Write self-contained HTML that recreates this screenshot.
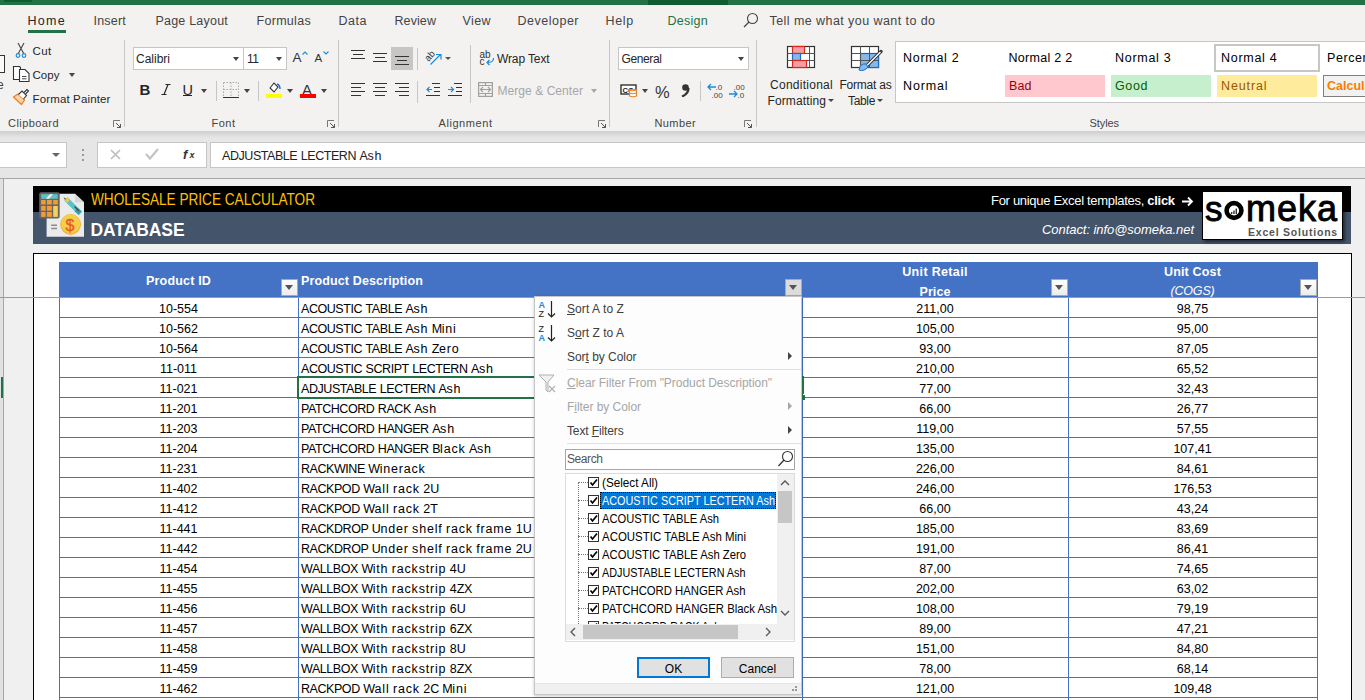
<!DOCTYPE html><html><head><meta charset="utf-8"><style>
html,body{margin:0;padding:0;width:1365px;height:700px;overflow:hidden;background:#f3f2f1}
body{position:relative;font-family:"Liberation Sans",sans-serif}
.t{position:absolute;white-space:nowrap;font-family:"Liberation Sans",sans-serif}
.r{position:absolute}
.tri{position:absolute;width:0;height:0;border-left:3.5px solid transparent;border-right:3.5px solid transparent;border-top:4px solid #444}
</style></head><body>
<div class="r" style="left:0px;top:0px;width:1365px;height:5px;background:#217346"></div>
<div class="r" style="left:4px;top:0px;width:28px;height:2px;background:#0e5c2f"></div>
<div class="r" style="left:648px;top:0px;width:80px;height:5px;background:#0e5c2f"></div>
<div class="r" style="left:0px;top:5px;width:1365px;height:126px;background:#f3f2f1"></div>
<div class="t" style="left:27.5px;top:15.42px;font-size:12.5px;line-height:12.5px;color:#262626;letter-spacing:1.288818359375px;">Home</div>
<div class="t" style="left:93.5px;top:15.42px;font-size:12.5px;line-height:12.5px;color:#444;letter-spacing:0.20621744791666666px;">Insert</div>
<div class="t" style="left:155.5px;top:15.42px;font-size:12.5px;line-height:12.5px;color:#444;letter-spacing:0.20925071022727273px;">Page Layout</div>
<div class="t" style="left:256.5px;top:15.42px;font-size:12.5px;line-height:12.5px;color:#444;letter-spacing:0.300537109375px;">Formulas</div>
<div class="t" style="left:338.5px;top:15.42px;font-size:12.5px;line-height:12.5px;color:#444;letter-spacing:0.52392578125px;">Data</div>
<div class="t" style="left:394.5px;top:15.42px;font-size:12.5px;line-height:12.5px;color:#444;letter-spacing:0.08561197916666667px;">Review</div>
<div class="t" style="left:462.5px;top:15.42px;font-size:12.5px;line-height:12.5px;color:#444;letter-spacing:0.40771484375px;">View</div>
<div class="t" style="left:517.5px;top:15.42px;font-size:12.5px;line-height:12.5px;color:#444;letter-spacing:0.5023871527777778px;">Developer</div>
<div class="t" style="left:605.5px;top:15.42px;font-size:12.5px;line-height:12.5px;color:#444;letter-spacing:0.69775390625px;">Help</div>
<div class="t" style="left:667.5px;top:15.42px;font-size:12.5px;line-height:12.5px;color:#217346;letter-spacing:0.2648111979166667px;">Design</div>
<div class="r" style="left:28px;top:30px;width:38px;height:3px;background:#217346"></div>
<div class="t" style="left:769.5px;top:15.42px;font-size:12.5px;line-height:12.5px;color:#444;letter-spacing:0.4351851851851852px;">Tell me what you want to do</div>
<svg class="r" style="left:743px;top:12px" width="16" height="16" viewBox="0 0 16 16"><circle cx="9.5" cy="6.5" r="5" fill="none" stroke="#444" stroke-width="1.1"/><line x1="6" y1="10" x2="1" y2="15" stroke="#444" stroke-width="1.2"/></svg>
<div class="r" style="left:124px;top:40px;width:1px;height:87px;background:#c8c6c4"></div>
<div class="r" style="left:338px;top:40px;width:1px;height:87px;background:#c8c6c4"></div>
<div class="r" style="left:609px;top:40px;width:1px;height:87px;background:#c8c6c4"></div>
<div class="r" style="left:756px;top:40px;width:1px;height:87px;background:#c8c6c4"></div>
<div class="r" style="left:0px;top:55px;width:5px;height:18px;background:#fafafa;border:1px solid #333;border-left:none;box-sizing:border-box"></div>
<div class="t" style="left:-3px;top:78.84px;font-size:12px;line-height:12px;color:#444;">e</div>
<div class="t" style="left:32.5px;top:46.27px;font-size:11.5px;line-height:11.5px;color:#262626;letter-spacing:0.36800781250000014px;">Cut</div>
<div class="t" style="left:32.5px;top:70.27px;font-size:11.5px;line-height:11.5px;color:#262626;letter-spacing:0.03822265625000032px;">Copy</div>
<div class="t" style="left:32.5px;top:94.27px;font-size:11.5px;line-height:11.5px;color:#262626;letter-spacing:0.13889787946428608px;">Format Painter</div>
<div class="t" style="left:8px;top:117.69px;font-size:11px;line-height:11px;color:#444;letter-spacing:0.4349826388888892px;">Clipboard</div>
<svg class="r" style="left:15px;top:42px" width="12" height="16" viewBox="0 0 12 16"><path d="M3 1 L9 12 M9 1 L3 12" stroke="#444" stroke-width="1.1" fill="none"/><circle cx="3" cy="13.5" r="1.8" fill="none" stroke="#1e8bd6" stroke-width="1.2"/><circle cx="9" cy="13.5" r="1.8" fill="none" stroke="#1e8bd6" stroke-width="1.2"/></svg>
<svg class="r" style="left:10px;top:63px" width="22" height="22" viewBox="10 63 22 22"><path d="M13.5 66.5 H19.5 L20.5 67.5 V79.5 H13.5 Z" fill="#fff" stroke="#333" stroke-width="1.1"/><path d="M19.5 69.5 H25 L29 73.5 V81.5 H19.5 Z" fill="#fff" stroke="#333" stroke-width="1.1"/><path d="M22 76.5 H26.5 M22 78.8 H26.5" stroke="#333" stroke-width="0.9"/></svg>
<div class="tri" style="left:69px;top:73px"></div>
<svg class="r" style="left:12px;top:88px" width="18" height="18" viewBox="12 88 18 18"><path d="M13.5 97 L21.5 104.5 L24.5 100 L18 94 Z" fill="#fbd3a8" stroke="#e8832a" stroke-width="1.3" stroke-linejoin="round"/><path d="M18.5 94.5 L22 91 L26.5 95.5 L23.5 99" fill="#fff" stroke="#333" stroke-width="1.1"/><path d="M24 92.5 L27 89.5 L28.5 91 L25.5 94" fill="#fff" stroke="#333" stroke-width="1.1"/></svg>
<svg class="r" style="left:113px;top:120px" width="8" height="8" viewBox="0 0 8 8"><path d="M0.5 7 V0.5 H7" fill="none" stroke="#777" stroke-width="1"/><path d="M3 3 L7.5 7.5 M4 7.5 H7.5 V4" fill="none" stroke="#555" stroke-width="1"/></svg>
<svg class="r" style="left:327px;top:120px" width="8" height="8" viewBox="0 0 8 8"><path d="M0.5 7 V0.5 H7" fill="none" stroke="#777" stroke-width="1"/><path d="M3 3 L7.5 7.5 M4 7.5 H7.5 V4" fill="none" stroke="#555" stroke-width="1"/></svg>
<svg class="r" style="left:598px;top:120px" width="8" height="8" viewBox="0 0 8 8"><path d="M0.5 7 V0.5 H7" fill="none" stroke="#777" stroke-width="1"/><path d="M3 3 L7.5 7.5 M4 7.5 H7.5 V4" fill="none" stroke="#555" stroke-width="1"/></svg>
<svg class="r" style="left:744px;top:120px" width="8" height="8" viewBox="0 0 8 8"><path d="M0.5 7 V0.5 H7" fill="none" stroke="#777" stroke-width="1"/><path d="M3 3 L7.5 7.5 M4 7.5 H7.5 V4" fill="none" stroke="#555" stroke-width="1"/></svg>
<div class="r" style="left:133px;top:47px;width:111px;height:23px;background:#fff;border:1px solid #c6c6c6;box-sizing:border-box"></div>
<div class="r" style="left:243px;top:47px;width:44px;height:23px;background:#fff;border:1px solid #c6c6c6;box-sizing:border-box"></div>
<div class="t" style="left:136px;top:52.84px;font-size:12px;line-height:12px;color:#262626;letter-spacing:-0.0013839285714283278px;">Calibri</div>
<div class="t" style="left:247px;top:52.84px;font-size:12px;line-height:12px;color:#262626;letter-spacing:-0.4787499999999998px;">11</div>
<div class="tri" style="left:233px;top:57px"></div>
<div class="tri" style="left:276px;top:57px"></div>
<div class="t" style="left:292.5px;top:51.07px;font-size:13.5px;line-height:13.5px;color:#333;">A</div>
<svg class="r" style="left:302px;top:51px" width="6" height="4" viewBox="0 0 6 4"><path d="M0.5 3.5 L3 1 L5.5 3.5" stroke="#1e8bd6" stroke-width="1.1" fill="none"/></svg>
<div class="t" style="left:314.5px;top:52.77px;font-size:11.5px;line-height:11.5px;color:#333;">A</div>
<svg class="r" style="left:323px;top:51px" width="6" height="4" viewBox="0 0 6 4"><path d="M0.5 0.5 L3 3 L5.5 0.5" stroke="#1e8bd6" stroke-width="1.1" fill="none"/></svg>
<div class="t" style="left:139.5px;top:82.30px;font-size:15px;line-height:15px;color:#262626;font-weight:700;">B</div>
<svg class="r" style="left:160px;top:83px" width="12" height="13" viewBox="0 0 12 13"><path d="M5.5 1.5 H10.5 M1.5 11.5 H6.5 M8 1.5 L4 11.5" stroke="#262626" stroke-width="1.2" fill="none"/></svg>
<div class="t" style="left:182.5px;top:82.73px;font-size:14.5px;line-height:14.5px;color:#262626;">U</div>
<div class="r" style="left:183px;top:95px;width:9px;height:1px;background:#262626"></div>
<div class="tri" style="left:201px;top:89px"></div>
<div class="r" style="left:216px;top:81px;width:1px;height:20px;background:#c8c6c4"></div>
<svg class="r" style="left:223px;top:82px" width="16" height="16" viewBox="0 0 16 16"><path d="M0.5 0.5 H15.5 V14.5 M0.5 0.5 V14.5 M8 0.5 V14.5 M0.5 7.5 H15.5" stroke="#aaa" stroke-width="1" stroke-dasharray="1.5 1.5" fill="none"/><path d="M0 15.5 H16" stroke="#333" stroke-width="1"/></svg>
<div class="tri" style="left:244px;top:89px"></div>
<div class="r" style="left:258px;top:81px;width:1px;height:20px;background:#c8c6c4"></div>
<svg class="r" style="left:266px;top:81px" width="16" height="13" viewBox="0 0 16 13"><path d="M4 7 L8 2 L12 6 L8 11 Z" fill="#fff" stroke="#333" stroke-width="1.1"/><path d="M11 3 Q14 4 14 8" stroke="#1e6fd6" stroke-width="1.5" fill="none"/></svg>
<div class="r" style="left:266px;top:94px;width:16px;height:4px;background:#ffff00"></div>
<div class="tri" style="left:287px;top:89px"></div>
<div class="t" style="left:302px;top:82.30px;font-size:15px;line-height:15px;color:#333;">A</div>
<div class="r" style="left:300px;top:94px;width:16px;height:4px;background:#ff0000"></div>
<div class="tri" style="left:321px;top:89px"></div>
<div class="t" style="left:211.5px;top:117.69px;font-size:11px;line-height:11px;color:#444;letter-spacing:0.4972070312500003px;">Font</div>
<div class="r" style="left:391px;top:47px;width:22px;height:23px;background:#c8c6c4"></div>
<div class="r" style="left:351px;top:50px;width:14px;height:1px;background:#333"></div><div class="r" style="left:353px;top:54px;width:10px;height:1px;background:#333"></div><div class="r" style="left:351px;top:58px;width:14px;height:1px;background:#333"></div>
<div class="r" style="left:373px;top:53px;width:14px;height:1px;background:#333"></div><div class="r" style="left:375px;top:57px;width:10px;height:1px;background:#333"></div><div class="r" style="left:373px;top:61px;width:14px;height:1px;background:#333"></div>
<div class="r" style="left:395px;top:56px;width:14px;height:1px;background:#333"></div><div class="r" style="left:397px;top:60px;width:10px;height:1px;background:#333"></div><div class="r" style="left:395px;top:64px;width:14px;height:1px;background:#333"></div>
<div class="r" style="left:417px;top:48px;width:1px;height:22px;background:#c8c6c4"></div>
<svg class="r" style="left:420px;top:44px" width="28" height="24" viewBox="420 44 28 24"><text x="0" y="0" font-size="9.5" font-family="Liberation Sans" fill="#333" transform="translate(428.5 62) rotate(-48)">ab</text><path d="M430.5 64.5 L440.5 54.5 M436 54.5 H441 V59.5" stroke="#1e8bd6" stroke-width="1.2" fill="none"/></svg>
<div class="tri" style="left:445px;top:57px;border-top-color:#555;border-left-width:3px;border-right-width:3px;border-top-width:3.5px"></div>
<div class="r" style="left:351px;top:83px;width:14px;height:1px;background:#333"></div><div class="r" style="left:351px;top:87px;width:10px;height:1px;background:#333"></div><div class="r" style="left:351px;top:91px;width:14px;height:1px;background:#333"></div><div class="r" style="left:351px;top:95px;width:10px;height:1px;background:#333"></div>
<div class="r" style="left:373px;top:83px;width:14px;height:1px;background:#333"></div><div class="r" style="left:375px;top:87px;width:10px;height:1px;background:#333"></div><div class="r" style="left:373px;top:91px;width:14px;height:1px;background:#333"></div><div class="r" style="left:375px;top:95px;width:10px;height:1px;background:#333"></div>
<div class="r" style="left:395px;top:83px;width:14px;height:1px;background:#333"></div><div class="r" style="left:399px;top:87px;width:10px;height:1px;background:#333"></div><div class="r" style="left:395px;top:91px;width:14px;height:1px;background:#333"></div><div class="r" style="left:399px;top:95px;width:10px;height:1px;background:#333"></div>
<div class="r" style="left:417px;top:81px;width:1px;height:22px;background:#c8c6c4"></div>
<svg class="r" style="left:426px;top:82px" width="14" height="14" viewBox="0 0 14 14"><path d="M6 1.5 H14 M8 5.5 H14 M8 9.5 H14 M0 13.5 H14" stroke="#333" stroke-width="1"/><path d="M1 7.5 H6 M3.5 5 L1 7.5 L3.5 10" stroke="#1e8bd6" stroke-width="1.2" fill="none"/></svg>
<svg class="r" style="left:448px;top:82px" width="14" height="14" viewBox="0 0 14 14"><path d="M6 1.5 H14 M8 5.5 H14 M8 9.5 H14 M0 13.5 H14" stroke="#333" stroke-width="1"/><path d="M0 7.5 H5.5 M3 5 L5.5 7.5 L3 10" stroke="#1e8bd6" stroke-width="1.2" fill="none"/></svg>
<div class="r" style="left:470px;top:45px;width:1px;height:58px;background:#c8c6c4"></div>
<svg class="r" style="left:478px;top:48px" width="18" height="20" viewBox="478 48 18 20"><text x="479.5" y="57.5" font-size="10" font-family="Liberation Sans" fill="#333">ab</text><text x="479.5" y="64.5" font-size="10" font-family="Liberation Sans" fill="#333">c</text><path d="M493.5 58 Q494 62.5 487 62.5 M489.5 60 L487 62.5 L489.5 65" stroke="#1e8bd6" stroke-width="1.2" fill="none"/></svg>
<div class="t" style="left:497px;top:52.84px;font-size:12px;line-height:12px;color:#262626;letter-spacing:-0.11989583333333324px;">Wrap Text</div>
<svg class="r" style="left:478px;top:82px" width="16" height="16" viewBox="0 0 16 16"><rect x="0.6" y="0.6" width="13.8" height="13.8" fill="none" stroke="#a0a0a0" stroke-width="1.2"/><path d="M0.5 3.5 H14.5 M0.5 11.5 H14.5 M7.5 0.5 V3.5 M7.5 11.5 V14.5 M2.5 7.5 H12.5 M5 5 L2.5 7.5 L5 10 M10 5 L12.5 7.5 L10 10" stroke="#a0a0a0" stroke-width="1.2" fill="none"/></svg>
<div class="t" style="left:497.5px;top:84.84px;font-size:12px;line-height:12px;color:#a6a6a6;letter-spacing:0.05671874999999967px;">Merge &amp; Center</div>
<div class="tri" style="left:591px;top:89px;border-top-color:#a6a6a6"></div>
<div class="t" style="left:438.5px;top:117.69px;font-size:11px;line-height:11px;color:#444;letter-spacing:0.5648350694444441px;">Alignment</div>
<div class="r" style="left:618px;top:47px;width:131px;height:23px;background:#fff;border:1px solid #c6c6c6;box-sizing:border-box"></div>
<div class="t" style="left:621.5px;top:52.84px;font-size:12px;line-height:12px;color:#262626;letter-spacing:-0.38468750000000035px;">General</div>
<div class="tri" style="left:738px;top:57px"></div>
<svg class="r" style="left:620px;top:84px" width="18" height="14" viewBox="0 0 18 14"><rect x="1" y="1" width="15" height="9" fill="#fff" stroke="#222" stroke-width="1.3"/><text x="2.5" y="8.5" font-size="7.5" font-weight="700" font-family="Liberation Sans" fill="#222">CC</text><path d="M9.5 6 Q13 4.5 16.5 6 V12 Q13 13.5 9.5 12 Z" fill="#fff" stroke="#e8832a" stroke-width="1.2"/><path d="M9.5 6 Q13 7.5 16.5 6 M9.5 9 Q13 10.5 16.5 9" stroke="#e8832a" stroke-width="1.1" fill="none"/></svg>
<div class="tri" style="left:642px;top:89px"></div>
<div class="t" style="left:655px;top:84.03px;font-size:16.5px;line-height:16.5px;color:#333;">%</div>
<svg class="r" style="left:681px;top:84px" width="9" height="13" viewBox="0 0 9 13"><circle cx="4.5" cy="3.5" r="3.3" fill="#333"/><path d="M7.5 4 Q7.5 10 1 12.5" stroke="#333" stroke-width="2.2" fill="none"/></svg>
<div class="r" style="left:700px;top:81px;width:1px;height:20px;background:#c8c6c4"></div>
<svg class="r" style="left:707px;top:82px" width="16" height="16" viewBox="0 0 16 16"><path d="M1 5 H9 M4 2 L1 5 L4 8" stroke="#1e8bd6" stroke-width="1.3" fill="none"/><text x="8.5" y="8" font-size="8" font-family="Liberation Sans" fill="#444">.0</text><text x="4.5" y="15.5" font-size="8" font-family="Liberation Sans" fill="#444">.00</text></svg>
<svg class="r" style="left:729px;top:82px" width="16" height="16" viewBox="0 0 16 16"><text x="4.5" y="8" font-size="8" font-family="Liberation Sans" fill="#444">.00</text><path d="M0 12 H8 M5 9 L8 12 L5 15" stroke="#1e8bd6" stroke-width="1.3" fill="none"/><text x="8.5" y="15.5" font-size="8" font-family="Liberation Sans" fill="#444">.0</text></svg>
<div class="t" style="left:654.5px;top:117.69px;font-size:11px;line-height:11px;color:#444;letter-spacing:0.395872395833333px;">Number</div>
<svg class="r" style="left:786px;top:45px" width="31" height="25" viewBox="786 45 31 25">
<rect x="787.5" y="46.5" width="27" height="21" fill="#fff" stroke="#333" stroke-width="1.2"/>
<path d="M809.5 46.5 V67.5 M787.5 53.5 H814.5 M787.5 60.5 H814.5" stroke="#555" stroke-width="1"/>
<rect x="792.5" y="46.5" width="12" height="7" fill="#f59ca6" stroke="#d6281c" stroke-width="1.2"/>
<rect x="792.5" y="53.5" width="8" height="7" fill="#86b9ea" stroke="#1a6fc4" stroke-width="1.2"/>
<rect x="792.5" y="60.5" width="14" height="7" fill="#f59ca6" stroke="#d6281c" stroke-width="1.2"/>
</svg>
<div class="t" style="left:770px;top:78.84px;font-size:12px;line-height:12px;color:#262626;letter-spacing:0.2688068181818179px;">Conditional</div>
<div class="t" style="left:767.5px;top:94.84px;font-size:12px;line-height:12px;color:#262626;letter-spacing:0.11465625000000017px;">Formatting</div>
<div class="tri" style="left:828px;top:99px;border-left-width:3px;border-right-width:3px;border-top-width:3px"></div>
<svg class="r" style="left:850px;top:45px" width="33" height="27" viewBox="850 45 33 27">
<rect x="851.5" y="46.5" width="27" height="21" fill="#fff" stroke="#333" stroke-width="1.2"/>
<rect x="860.5" y="53.5" width="18" height="14" fill="#86b9ea" stroke="#1a6fc4" stroke-width="1.2"/>
<path d="M860.5 46.5 V67.5 M869.5 46.5 V67.5 M851.5 53.5 H878.5 M851.5 60.5 H878.5" stroke="#555" stroke-width="1"/>
<path d="M881 51.5 L866 66.5" stroke="#333" stroke-width="3.2" stroke-linecap="round"/>
<path d="M880.5 52 L866 66.5" stroke="#fff" stroke-width="1.4"/>
<path d="M866 64 Q860 63 859 70 Q864 72 868 67 Z" fill="#86b9ea" stroke="#1a6fc4" stroke-width="1"/>
</svg>
<div class="t" style="left:839.5px;top:78.84px;font-size:12px;line-height:12px;color:#262626;letter-spacing:-0.2236805555555558px;">Format as</div>
<div class="t" style="left:848px;top:94.84px;font-size:12px;line-height:12px;color:#262626;letter-spacing:-0.3376874999999998px;">Table</div>
<div class="tri" style="left:877px;top:99px;border-left-width:3px;border-right-width:3px;border-top-width:3px"></div>
<div class="r" style="left:895px;top:41px;width:470px;height:62px;background:#fff;border:1px solid #c6c6c6;border-right:none;box-sizing:border-box"></div>
<div class="t" style="left:903px;top:52.42px;font-size:12.5px;line-height:12.5px;color:#000;letter-spacing:0.7237548828125px;">Normal 2</div>
<div class="t" style="left:1008.5px;top:52.42px;font-size:12.5px;line-height:12.5px;color:#000;letter-spacing:0.2865234375px;">Normal 2 2</div>
<div class="t" style="left:1115px;top:52.42px;font-size:12.5px;line-height:12.5px;color:#000;letter-spacing:0.7237548828125px;">Normal 3</div>
<div class="r" style="left:1214px;top:44px;width:106px;height:28px;border:2px solid #c6c6c6;box-sizing:border-box"></div>
<div class="t" style="left:1221px;top:52.42px;font-size:12.5px;line-height:12.5px;color:#000;letter-spacing:0.7237548828125px;">Normal 4</div>
<div class="t" style="left:1327px;top:52.42px;font-size:12.5px;line-height:12.5px;color:#000;letter-spacing:0.5599888392857143px;">Percent</div>
<div class="t" style="left:903px;top:80.42px;font-size:12.5px;line-height:12.5px;color:#000;letter-spacing:0.869140625px;">Normal</div>
<div class="r" style="left:1005px;top:75px;width:100px;height:22px;background:#ffc7ce"></div>
<div class="t" style="left:1009px;top:80.42px;font-size:12.5px;line-height:12.5px;color:#9c0006;letter-spacing:0.0859375px;">Bad</div>
<div class="r" style="left:1111px;top:75px;width:100px;height:22px;background:#c6efce"></div>
<div class="t" style="left:1115px;top:80.42px;font-size:12.5px;line-height:12.5px;color:#006100;letter-spacing:0.605224609375px;">Good</div>
<div class="r" style="left:1217px;top:75px;width:100px;height:22px;background:#ffeb9c"></div>
<div class="t" style="left:1221px;top:80.42px;font-size:12.5px;line-height:12.5px;color:#9c5700;letter-spacing:0.8861607142857143px;">Neutral</div>
<div class="r" style="left:1323px;top:75px;width:42px;height:22px;background:#f2f2f2;border:1px solid #7f7f7f;border-right:none;box-sizing:border-box"></div>
<div class="t" style="left:1327px;top:80.42px;font-size:12.5px;line-height:12.5px;color:#fa7d00;font-weight:700;">Calculation</div>
<div class="t" style="left:1089.5px;top:117.69px;font-size:11px;line-height:11px;color:#444;letter-spacing:-0.07587239583333331px;">Styles</div>
<div class="r" style="left:0;top:131px;width:1365px;height:7px;background:linear-gradient(#cfcfcf,#e6e6e6)"></div>
<div class="r" style="left:0px;top:138px;width:1365px;height:40px;background:#e6e6e6"></div>
<div class="r" style="left:0px;top:142px;width:67px;height:26px;background:#fff;border:1px solid #c6c6c6;border-left:none;box-sizing:border-box"></div>
<div class="tri" style="left:52px;top:153px;border-top-color:#666;border-left-width:4px;border-right-width:4px"></div>
<div class="r" style="left:82px;top:149px;width:2px;height:2px;background:#999"></div>
<div class="r" style="left:82px;top:154px;width:2px;height:2px;background:#999"></div>
<div class="r" style="left:82px;top:159px;width:2px;height:2px;background:#999"></div>
<div class="r" style="left:97px;top:142px;width:110px;height:26px;background:#fff;border:1px solid #c6c6c6;box-sizing:border-box"></div>
<svg class="r" style="left:110px;top:149px" width="11" height="11" viewBox="0 0 11 11"><path d="M1 1 L10 10 M10 1 L1 10" stroke="#bdbdbd" stroke-width="1.7"/></svg>
<svg class="r" style="left:145px;top:148px" width="14" height="12" viewBox="0 0 14 12"><path d="M1 6 L5 10.5 L13 1" stroke="#c4c4c4" stroke-width="2.2" fill="none"/></svg>
<div class="t" style="left:183px;top:148.00px;font-size:13px;line-height:13px;color:#333;font-weight:700;font-style:italic;font-family:"Liberation Serif",serif;">f</div>
<div class="t" style="left:189.5px;top:151.38px;font-size:9px;line-height:9px;color:#333;font-weight:700;font-style:italic;font-family:"Liberation Serif",serif;">x</div>
<div class="r" style="left:210px;top:142px;width:1155px;height:26px;background:#fff;border:1px solid #c6c6c6;border-right:none;box-sizing:border-box"></div>
<div class="t" style="left:222px;top:150.42px;font-size:12.5px;line-height:12.5px;color:#222"><span style="letter-spacing:-0.44px">ADJUSTABLE</span><span style="letter-spacing:0px"> </span><span style="letter-spacing:-0.44px">LECTERN</span><span style="letter-spacing:0px"> </span><span style="letter-spacing:-0.44px">A</span><span style="letter-spacing:0.8px">sh</span></div>
<div class="r" style="left:0px;top:178px;width:1365px;height:522px;background:#f0f0f0"></div>
<div class="r" style="left:0px;top:178px;width:1365px;height:1px;background:#a6a6a6"></div>
<div class="r" style="left:0px;top:179px;width:3px;height:521px;background:#e1e1e1"></div>
<div class="r" style="left:3px;top:179px;width:1px;height:521px;background:#a6a6a6"></div>
<div class="r" style="left:1px;top:377px;width:2px;height:21px;background:#217346"></div>
<div class="r" style="left:33px;top:186px;width:1318px;height:26px;background:#000"></div>
<div class="r" style="left:33px;top:212px;width:1318px;height:32px;background:#44546a"></div>
<div class="t" style="left:90.5px;top:192.46px;font-size:16px;line-height:16px;color:#ffc000;transform:scaleX(0.8501);transform-origin:0 0;">WHOLESALE PRICE CALCULATOR</div>
<div class="t" style="left:90.5px;top:222.19px;font-size:17.5px;line-height:17.5px;color:#fff;font-weight:700;letter-spacing:-0.0787353515625px;">DATABASE</div>
<div class="t" style="left:991px;top:194.00px;font-size:13px;line-height:13px;color:#fff;letter-spacing:-0.3px">For unique Excel templates, <b>click</b></div>
<svg class="r" style="left:1181px;top:196px" width="13" height="11" viewBox="0 0 13 11"><path d="M1 5.5 H11 M7 1.5 L11 5.5 L7 9.5" stroke="#fff" stroke-width="1.8" fill="none"/></svg>
<div class="t" style="left:1042px;top:223.00px;font-size:13px;line-height:13px;color:#fff;letter-spacing:-0.05778320312499948px;font-style:italic;">Contact: info@someka.net</div>
<div class="r" style="left:1202px;top:191px;width:141px;height:49px;background:#fff;border:1px solid #000;box-sizing:border-box;box-shadow:2px 2px 3px rgba(0,0,0,0.5)"></div>
<div class="t" style="left:1205px;top:191.37px;font-size:35px;line-height:35px;color:#000;-webkit-text-stroke:0.9px #000;">s</div>
<svg class="r" style="left:1224px;top:200px" width="20" height="21" viewBox="0 0 20 21"><circle cx="10" cy="10.5" r="7.4" fill="none" stroke="#000" stroke-width="4.6"/><rect x="7" y="12" width="1.4" height="2" fill="#333"/><rect x="9.3" y="10.5" width="1.4" height="3.5" fill="#333"/><rect x="11.6" y="8.5" width="1.4" height="5.5" fill="#333"/></svg>
<div class="t" style="left:1246px;top:190.53px;font-size:36px;line-height:36px;color:#000;letter-spacing:0.9914843749999989px;-webkit-text-stroke:0.9px #000;">meka</div>
<div class="r" style="left:1239px;top:205px;width:11px;height:9px"></div>
<div class="t" style="left:1248px;top:227.11px;font-size:10.5px;line-height:10.5px;color:#555;font-weight:700;letter-spacing:0.7874609374999996px;">Excel Solutions</div>
<svg class="r" style="left:38px;top:191px" width="50" height="48" viewBox="0 0 50 48">
<path d="M8.6 2.8 H37 L46 11.3 V45.8 H8.6 Z" fill="#ebebeb"/><path d="M37 2.8 V11.3 H46 Z" fill="#d5d5d5"/>
<rect x="1.2" y="1.2" width="20.5" height="26.3" rx="2" fill="#666"/><rect x="3.2" y="3.2" width="16.5" height="4.6" fill="#5bc2c8"/><path d="M8 7.8 L12 3.2 H15 L11 7.8 Z" fill="#f2f2f2"/>
<g fill="#f39c34"><rect x="3.2" y="9" width="4.4" height="4.5"/><rect x="9" y="9" width="4.8" height="4.5"/><rect x="15.2" y="9" width="4.6" height="4.5"/><rect x="3.2" y="15" width="4.4" height="4.7"/><rect x="9" y="15" width="4.8" height="4.7"/><rect x="3.2" y="21" width="4.4" height="4.9"/><rect x="9" y="21" width="4.8" height="4.9"/></g><rect x="15.2" y="15" width="4.6" height="10.9" fill="#f5d05a"/>
<path d="M25.5 6.3 L29 8.2 L27.5 9.8 Z" fill="#444"/><path d="M28 8 L42.5 22.5" stroke="#5bc2c8" stroke-width="4.6"/><path d="M28 8 L30.5 10.5" stroke="#f5c542" stroke-width="4"/><path d="M38 18.5 L42 22" stroke="#3a9fa6" stroke-width="4.6"/><path d="M36.5 15.5 L41 20" stroke="#444" stroke-width="1.3"/>
<path d="M13.2 34.3 H19 M13.2 37.5 H19" stroke="#8a8a8a" stroke-width="1.4"/>
<circle cx="32.6" cy="33.5" r="10.4" fill="#f0b43a"/><circle cx="32.6" cy="32.8" r="9.6" fill="#f6cd48"/><text x="27.6" y="40" font-size="16" font-family="Liberation Sans" fill="#e8552a" stroke="#e8552a" stroke-width="0.3">$</text>
</svg>
<div class="r" style="left:33px;top:253px;width:1319px;height:447px;background:#fff;border-left:1px solid #000;border-top:1px solid #000;border-right:1px solid #000;box-sizing:border-box"></div>
<div class="r" style="left:59px;top:262px;width:1259px;height:35px;background:#4472c4"></div>
<div class="t" style="left:59px;top:275.42px;font-size:12.5px;line-height:12.5px;color:#fff;font-weight:700;letter-spacing:0.1802734375px;width:239px;text-align:center;">Product ID</div>
<div class="t" style="left:301px;top:275.42px;font-size:12.5px;line-height:12.5px;color:#fff;font-weight:700;letter-spacing:0.13363486842105263px;">Product Description</div>
<div class="t" style="left:802px;top:266.42px;font-size:12.5px;line-height:12.5px;color:#fff;font-weight:700;letter-spacing:0.33531605113636365px;width:266px;text-align:center;">Unit Retail</div>
<div class="t" style="left:802px;top:286.42px;font-size:12.5px;line-height:12.5px;color:#fff;font-weight:700;letter-spacing:0.0841796875px;width:266px;text-align:center;">Price</div>
<div class="t" style="left:1068px;top:266.42px;font-size:12.5px;line-height:12.5px;color:#fff;font-weight:700;letter-spacing:0.1611328125px;width:249px;text-align:center;">Unit Cost</div>
<div class="t" style="left:1068px;top:285.42px;font-size:12.5px;line-height:12.5px;color:#fff;letter-spacing:-0.189453125px;font-style:italic;width:249px;text-align:center;">(COGS)</div>
<div class="r" style="left:281px;top:279px;width:17px;height:17px;background:linear-gradient(#fff,#ececec);border:1px solid #a9a9a9;box-sizing:border-box"></div><div class="tri" style="left:285px;top:285px;border-left-width:4.5px;border-right-width:4.5px;border-top-width:5px;border-top-color:#555"></div>
<div class="r" style="left:785px;top:279px;width:17px;height:17px;background:#dcdcdc;border:1px solid #a9a9a9;box-sizing:border-box"></div><div class="tri" style="left:789px;top:285px;border-left-width:4.5px;border-right-width:4.5px;border-top-width:5px;border-top-color:#555"></div>
<div class="r" style="left:1051px;top:279px;width:17px;height:17px;background:linear-gradient(#fff,#ececec);border:1px solid #a9a9a9;box-sizing:border-box"></div><div class="tri" style="left:1055px;top:285px;border-left-width:4.5px;border-right-width:4.5px;border-top-width:5px;border-top-color:#555"></div>
<div class="r" style="left:1300px;top:279px;width:17px;height:17px;background:linear-gradient(#fff,#ececec);border:1px solid #a9a9a9;box-sizing:border-box"></div><div class="tri" style="left:1304px;top:285px;border-left-width:4.5px;border-right-width:4.5px;border-top-width:5px;border-top-color:#555"></div>
<div class="r" style="left:0px;top:297px;width:1365px;height:1px;background:#9b9b9b"></div>
<div class="r" style="left:59px;top:298px;width:1px;height:402px;background:#4472c4"></div>
<div class="r" style="left:298px;top:298px;width:1px;height:402px;background:#4472c4"></div>
<div class="r" style="left:802px;top:298px;width:1px;height:402px;background:#4472c4"></div>
<div class="r" style="left:1068px;top:298px;width:1px;height:402px;background:#4472c4"></div>
<div class="r" style="left:1317px;top:298px;width:1px;height:402px;background:#4472c4"></div>
<div class="r" style="left:59px;top:317px;width:1259px;height:1px;background:#4472c4"></div>
<div class="t" style="left:59px;top:303.42px;font-size:12.5px;line-height:12.5px;color:#000;width:239px;text-align:center;">10-554</div>
<div class="t" style="left:301px;top:303.42px;font-size:12.5px;line-height:12.5px;color:#000"><span style="letter-spacing:-0.44px">ACOUSTIC</span><span style="letter-spacing:0px"> </span><span style="letter-spacing:-0.44px">TABLE</span><span style="letter-spacing:0px"> </span><span style="letter-spacing:-0.44px">A</span><span style="letter-spacing:0.8px">sh</span></div>
<div class="t" style="left:802px;top:303.42px;font-size:12.5px;line-height:12.5px;color:#000;width:266px;text-align:center;">211,00</div>
<div class="t" style="left:1068px;top:303.42px;font-size:12.5px;line-height:12.5px;color:#000;width:249px;text-align:center;">98,75</div>
<div class="r" style="left:59px;top:337px;width:1259px;height:1px;background:#4472c4"></div>
<div class="t" style="left:59px;top:323.42px;font-size:12.5px;line-height:12.5px;color:#000;width:239px;text-align:center;">10-562</div>
<div class="t" style="left:301px;top:323.42px;font-size:12.5px;line-height:12.5px;color:#000"><span style="letter-spacing:-0.44px">ACOUSTIC</span><span style="letter-spacing:0px"> </span><span style="letter-spacing:-0.44px">TABLE</span><span style="letter-spacing:0px"> </span><span style="letter-spacing:-0.44px">A</span><span style="letter-spacing:0.8px">sh</span><span style="letter-spacing:0px"> </span><span style="letter-spacing:-0.44px">M</span><span style="letter-spacing:0.8px">ini</span></div>
<div class="t" style="left:802px;top:323.42px;font-size:12.5px;line-height:12.5px;color:#000;width:266px;text-align:center;">105,00</div>
<div class="t" style="left:1068px;top:323.42px;font-size:12.5px;line-height:12.5px;color:#000;width:249px;text-align:center;">95,00</div>
<div class="r" style="left:59px;top:357px;width:1259px;height:1px;background:#4472c4"></div>
<div class="t" style="left:59px;top:343.42px;font-size:12.5px;line-height:12.5px;color:#000;width:239px;text-align:center;">10-564</div>
<div class="t" style="left:301px;top:343.42px;font-size:12.5px;line-height:12.5px;color:#000"><span style="letter-spacing:-0.44px">ACOUSTIC</span><span style="letter-spacing:0px"> </span><span style="letter-spacing:-0.44px">TABLE</span><span style="letter-spacing:0px"> </span><span style="letter-spacing:-0.44px">A</span><span style="letter-spacing:0.8px">sh</span><span style="letter-spacing:0px"> </span><span style="letter-spacing:-0.44px">Z</span><span style="letter-spacing:0.8px">ero</span></div>
<div class="t" style="left:802px;top:343.42px;font-size:12.5px;line-height:12.5px;color:#000;width:266px;text-align:center;">93,00</div>
<div class="t" style="left:1068px;top:343.42px;font-size:12.5px;line-height:12.5px;color:#000;width:249px;text-align:center;">87,05</div>
<div class="r" style="left:59px;top:377px;width:1259px;height:1px;background:#4472c4"></div>
<div class="t" style="left:59px;top:363.42px;font-size:12.5px;line-height:12.5px;color:#000;width:239px;text-align:center;">11-011</div>
<div class="t" style="left:301px;top:363.42px;font-size:12.5px;line-height:12.5px;color:#000"><span style="letter-spacing:-0.44px">ACOUSTIC</span><span style="letter-spacing:0px"> </span><span style="letter-spacing:-0.44px">SCRIPT</span><span style="letter-spacing:0px"> </span><span style="letter-spacing:-0.44px">LECTERN</span><span style="letter-spacing:0px"> </span><span style="letter-spacing:-0.44px">A</span><span style="letter-spacing:0.8px">sh</span></div>
<div class="t" style="left:802px;top:363.42px;font-size:12.5px;line-height:12.5px;color:#000;width:266px;text-align:center;">210,00</div>
<div class="t" style="left:1068px;top:363.42px;font-size:12.5px;line-height:12.5px;color:#000;width:249px;text-align:center;">65,52</div>
<div class="r" style="left:59px;top:397px;width:1259px;height:1px;background:#4472c4"></div>
<div class="t" style="left:59px;top:383.42px;font-size:12.5px;line-height:12.5px;color:#000;width:239px;text-align:center;">11-021</div>
<div class="t" style="left:301px;top:383.42px;font-size:12.5px;line-height:12.5px;color:#000"><span style="letter-spacing:-0.44px">ADJUSTABLE</span><span style="letter-spacing:0px"> </span><span style="letter-spacing:-0.44px">LECTERN</span><span style="letter-spacing:0px"> </span><span style="letter-spacing:-0.44px">A</span><span style="letter-spacing:0.8px">sh</span></div>
<div class="t" style="left:802px;top:383.42px;font-size:12.5px;line-height:12.5px;color:#000;width:266px;text-align:center;">77,00</div>
<div class="t" style="left:1068px;top:383.42px;font-size:12.5px;line-height:12.5px;color:#000;width:249px;text-align:center;">32,43</div>
<div class="r" style="left:59px;top:417px;width:1259px;height:1px;background:#4472c4"></div>
<div class="t" style="left:59px;top:403.42px;font-size:12.5px;line-height:12.5px;color:#000;width:239px;text-align:center;">11-201</div>
<div class="t" style="left:301px;top:403.42px;font-size:12.5px;line-height:12.5px;color:#000"><span style="letter-spacing:-0.44px">PATCHCORD</span><span style="letter-spacing:0px"> </span><span style="letter-spacing:-0.44px">RACK</span><span style="letter-spacing:0px"> </span><span style="letter-spacing:-0.44px">A</span><span style="letter-spacing:0.8px">sh</span></div>
<div class="t" style="left:802px;top:403.42px;font-size:12.5px;line-height:12.5px;color:#000;width:266px;text-align:center;">66,00</div>
<div class="t" style="left:1068px;top:403.42px;font-size:12.5px;line-height:12.5px;color:#000;width:249px;text-align:center;">26,77</div>
<div class="r" style="left:59px;top:437px;width:1259px;height:1px;background:#4472c4"></div>
<div class="t" style="left:59px;top:423.42px;font-size:12.5px;line-height:12.5px;color:#000;width:239px;text-align:center;">11-203</div>
<div class="t" style="left:301px;top:423.42px;font-size:12.5px;line-height:12.5px;color:#000"><span style="letter-spacing:-0.44px">PATCHCORD</span><span style="letter-spacing:0px"> </span><span style="letter-spacing:-0.44px">HANGER</span><span style="letter-spacing:0px"> </span><span style="letter-spacing:-0.44px">A</span><span style="letter-spacing:0.8px">sh</span></div>
<div class="t" style="left:802px;top:423.42px;font-size:12.5px;line-height:12.5px;color:#000;width:266px;text-align:center;">119,00</div>
<div class="t" style="left:1068px;top:423.42px;font-size:12.5px;line-height:12.5px;color:#000;width:249px;text-align:center;">57,55</div>
<div class="r" style="left:59px;top:457px;width:1259px;height:1px;background:#4472c4"></div>
<div class="t" style="left:59px;top:443.42px;font-size:12.5px;line-height:12.5px;color:#000;width:239px;text-align:center;">11-204</div>
<div class="t" style="left:301px;top:443.42px;font-size:12.5px;line-height:12.5px;color:#000"><span style="letter-spacing:-0.44px">PATCHCORD</span><span style="letter-spacing:0px"> </span><span style="letter-spacing:-0.44px">HANGER</span><span style="letter-spacing:0px"> </span><span style="letter-spacing:-0.44px">B</span><span style="letter-spacing:0.8px">lack</span><span style="letter-spacing:0px"> </span><span style="letter-spacing:-0.44px">A</span><span style="letter-spacing:0.8px">sh</span></div>
<div class="t" style="left:802px;top:443.42px;font-size:12.5px;line-height:12.5px;color:#000;width:266px;text-align:center;">135,00</div>
<div class="t" style="left:1068px;top:443.42px;font-size:12.5px;line-height:12.5px;color:#000;width:249px;text-align:center;">107,41</div>
<div class="r" style="left:59px;top:477px;width:1259px;height:1px;background:#4472c4"></div>
<div class="t" style="left:59px;top:463.42px;font-size:12.5px;line-height:12.5px;color:#000;width:239px;text-align:center;">11-231</div>
<div class="t" style="left:301px;top:463.42px;font-size:12.5px;line-height:12.5px;color:#000"><span style="letter-spacing:-0.44px">RACKWINE</span><span style="letter-spacing:0px"> </span><span style="letter-spacing:-0.44px">W</span><span style="letter-spacing:0.8px">inerack</span></div>
<div class="t" style="left:802px;top:463.42px;font-size:12.5px;line-height:12.5px;color:#000;width:266px;text-align:center;">226,00</div>
<div class="t" style="left:1068px;top:463.42px;font-size:12.5px;line-height:12.5px;color:#000;width:249px;text-align:center;">84,61</div>
<div class="r" style="left:59px;top:497px;width:1259px;height:1px;background:#4472c4"></div>
<div class="t" style="left:59px;top:483.42px;font-size:12.5px;line-height:12.5px;color:#000;width:239px;text-align:center;">11-402</div>
<div class="t" style="left:301px;top:483.42px;font-size:12.5px;line-height:12.5px;color:#000"><span style="letter-spacing:-0.44px">RACKPOD</span><span style="letter-spacing:0px"> </span><span style="letter-spacing:-0.44px">W</span><span style="letter-spacing:0.8px">all</span><span style="letter-spacing:0px"> </span><span style="letter-spacing:0.8px">rack</span><span style="letter-spacing:0px"> </span><span style="letter-spacing:0px">2</span><span style="letter-spacing:-0.44px">U</span></div>
<div class="t" style="left:802px;top:483.42px;font-size:12.5px;line-height:12.5px;color:#000;width:266px;text-align:center;">246,00</div>
<div class="t" style="left:1068px;top:483.42px;font-size:12.5px;line-height:12.5px;color:#000;width:249px;text-align:center;">176,53</div>
<div class="r" style="left:59px;top:517px;width:1259px;height:1px;background:#4472c4"></div>
<div class="t" style="left:59px;top:503.42px;font-size:12.5px;line-height:12.5px;color:#000;width:239px;text-align:center;">11-412</div>
<div class="t" style="left:301px;top:503.42px;font-size:12.5px;line-height:12.5px;color:#000"><span style="letter-spacing:-0.44px">RACKPOD</span><span style="letter-spacing:0px"> </span><span style="letter-spacing:-0.44px">W</span><span style="letter-spacing:0.8px">all</span><span style="letter-spacing:0px"> </span><span style="letter-spacing:0.8px">rack</span><span style="letter-spacing:0px"> </span><span style="letter-spacing:0px">2</span><span style="letter-spacing:-0.44px">T</span></div>
<div class="t" style="left:802px;top:503.42px;font-size:12.5px;line-height:12.5px;color:#000;width:266px;text-align:center;">66,00</div>
<div class="t" style="left:1068px;top:503.42px;font-size:12.5px;line-height:12.5px;color:#000;width:249px;text-align:center;">43,24</div>
<div class="r" style="left:59px;top:537px;width:1259px;height:1px;background:#4472c4"></div>
<div class="t" style="left:59px;top:523.42px;font-size:12.5px;line-height:12.5px;color:#000;width:239px;text-align:center;">11-441</div>
<div class="t" style="left:301px;top:523.42px;font-size:12.5px;line-height:12.5px;color:#000"><span style="letter-spacing:-0.44px">RACKDROP</span><span style="letter-spacing:0px"> </span><span style="letter-spacing:-0.44px">U</span><span style="letter-spacing:0.8px">nder</span><span style="letter-spacing:0px"> </span><span style="letter-spacing:0.8px">shelf</span><span style="letter-spacing:0px"> </span><span style="letter-spacing:0.8px">rack</span><span style="letter-spacing:0px"> </span><span style="letter-spacing:0.8px">frame</span><span style="letter-spacing:0px"> </span><span style="letter-spacing:0px">1</span><span style="letter-spacing:-0.44px">U</span></div>
<div class="t" style="left:802px;top:523.42px;font-size:12.5px;line-height:12.5px;color:#000;width:266px;text-align:center;">185,00</div>
<div class="t" style="left:1068px;top:523.42px;font-size:12.5px;line-height:12.5px;color:#000;width:249px;text-align:center;">83,69</div>
<div class="r" style="left:59px;top:557px;width:1259px;height:1px;background:#4472c4"></div>
<div class="t" style="left:59px;top:543.42px;font-size:12.5px;line-height:12.5px;color:#000;width:239px;text-align:center;">11-442</div>
<div class="t" style="left:301px;top:543.42px;font-size:12.5px;line-height:12.5px;color:#000"><span style="letter-spacing:-0.44px">RACKDROP</span><span style="letter-spacing:0px"> </span><span style="letter-spacing:-0.44px">U</span><span style="letter-spacing:0.8px">nder</span><span style="letter-spacing:0px"> </span><span style="letter-spacing:0.8px">shelf</span><span style="letter-spacing:0px"> </span><span style="letter-spacing:0.8px">rack</span><span style="letter-spacing:0px"> </span><span style="letter-spacing:0.8px">frame</span><span style="letter-spacing:0px"> </span><span style="letter-spacing:0px">2</span><span style="letter-spacing:-0.44px">U</span></div>
<div class="t" style="left:802px;top:543.42px;font-size:12.5px;line-height:12.5px;color:#000;width:266px;text-align:center;">191,00</div>
<div class="t" style="left:1068px;top:543.42px;font-size:12.5px;line-height:12.5px;color:#000;width:249px;text-align:center;">86,41</div>
<div class="r" style="left:59px;top:577px;width:1259px;height:1px;background:#4472c4"></div>
<div class="t" style="left:59px;top:563.42px;font-size:12.5px;line-height:12.5px;color:#000;width:239px;text-align:center;">11-454</div>
<div class="t" style="left:301px;top:563.42px;font-size:12.5px;line-height:12.5px;color:#000"><span style="letter-spacing:-0.44px">WALLBOX</span><span style="letter-spacing:0px"> </span><span style="letter-spacing:-0.44px">W</span><span style="letter-spacing:0.8px">ith</span><span style="letter-spacing:0px"> </span><span style="letter-spacing:0.8px">rackstrip</span><span style="letter-spacing:0px"> </span><span style="letter-spacing:0px">4</span><span style="letter-spacing:-0.44px">U</span></div>
<div class="t" style="left:802px;top:563.42px;font-size:12.5px;line-height:12.5px;color:#000;width:266px;text-align:center;">87,00</div>
<div class="t" style="left:1068px;top:563.42px;font-size:12.5px;line-height:12.5px;color:#000;width:249px;text-align:center;">74,65</div>
<div class="r" style="left:59px;top:597px;width:1259px;height:1px;background:#4472c4"></div>
<div class="t" style="left:59px;top:583.42px;font-size:12.5px;line-height:12.5px;color:#000;width:239px;text-align:center;">11-455</div>
<div class="t" style="left:301px;top:583.42px;font-size:12.5px;line-height:12.5px;color:#000"><span style="letter-spacing:-0.44px">WALLBOX</span><span style="letter-spacing:0px"> </span><span style="letter-spacing:-0.44px">W</span><span style="letter-spacing:0.8px">ith</span><span style="letter-spacing:0px"> </span><span style="letter-spacing:0.8px">rackstrip</span><span style="letter-spacing:0px"> </span><span style="letter-spacing:0px">4</span><span style="letter-spacing:-0.44px">ZX</span></div>
<div class="t" style="left:802px;top:583.42px;font-size:12.5px;line-height:12.5px;color:#000;width:266px;text-align:center;">202,00</div>
<div class="t" style="left:1068px;top:583.42px;font-size:12.5px;line-height:12.5px;color:#000;width:249px;text-align:center;">63,02</div>
<div class="r" style="left:59px;top:617px;width:1259px;height:1px;background:#4472c4"></div>
<div class="t" style="left:59px;top:603.42px;font-size:12.5px;line-height:12.5px;color:#000;width:239px;text-align:center;">11-456</div>
<div class="t" style="left:301px;top:603.42px;font-size:12.5px;line-height:12.5px;color:#000"><span style="letter-spacing:-0.44px">WALLBOX</span><span style="letter-spacing:0px"> </span><span style="letter-spacing:-0.44px">W</span><span style="letter-spacing:0.8px">ith</span><span style="letter-spacing:0px"> </span><span style="letter-spacing:0.8px">rackstrip</span><span style="letter-spacing:0px"> </span><span style="letter-spacing:0px">6</span><span style="letter-spacing:-0.44px">U</span></div>
<div class="t" style="left:802px;top:603.42px;font-size:12.5px;line-height:12.5px;color:#000;width:266px;text-align:center;">108,00</div>
<div class="t" style="left:1068px;top:603.42px;font-size:12.5px;line-height:12.5px;color:#000;width:249px;text-align:center;">79,19</div>
<div class="r" style="left:59px;top:637px;width:1259px;height:1px;background:#4472c4"></div>
<div class="t" style="left:59px;top:623.42px;font-size:12.5px;line-height:12.5px;color:#000;width:239px;text-align:center;">11-457</div>
<div class="t" style="left:301px;top:623.42px;font-size:12.5px;line-height:12.5px;color:#000"><span style="letter-spacing:-0.44px">WALLBOX</span><span style="letter-spacing:0px"> </span><span style="letter-spacing:-0.44px">W</span><span style="letter-spacing:0.8px">ith</span><span style="letter-spacing:0px"> </span><span style="letter-spacing:0.8px">rackstrip</span><span style="letter-spacing:0px"> </span><span style="letter-spacing:0px">6</span><span style="letter-spacing:-0.44px">ZX</span></div>
<div class="t" style="left:802px;top:623.42px;font-size:12.5px;line-height:12.5px;color:#000;width:266px;text-align:center;">89,00</div>
<div class="t" style="left:1068px;top:623.42px;font-size:12.5px;line-height:12.5px;color:#000;width:249px;text-align:center;">47,21</div>
<div class="r" style="left:59px;top:657px;width:1259px;height:1px;background:#4472c4"></div>
<div class="t" style="left:59px;top:643.42px;font-size:12.5px;line-height:12.5px;color:#000;width:239px;text-align:center;">11-458</div>
<div class="t" style="left:301px;top:643.42px;font-size:12.5px;line-height:12.5px;color:#000"><span style="letter-spacing:-0.44px">WALLBOX</span><span style="letter-spacing:0px"> </span><span style="letter-spacing:-0.44px">W</span><span style="letter-spacing:0.8px">ith</span><span style="letter-spacing:0px"> </span><span style="letter-spacing:0.8px">rackstrip</span><span style="letter-spacing:0px"> </span><span style="letter-spacing:0px">8</span><span style="letter-spacing:-0.44px">U</span></div>
<div class="t" style="left:802px;top:643.42px;font-size:12.5px;line-height:12.5px;color:#000;width:266px;text-align:center;">151,00</div>
<div class="t" style="left:1068px;top:643.42px;font-size:12.5px;line-height:12.5px;color:#000;width:249px;text-align:center;">84,80</div>
<div class="r" style="left:59px;top:677px;width:1259px;height:1px;background:#4472c4"></div>
<div class="t" style="left:59px;top:663.42px;font-size:12.5px;line-height:12.5px;color:#000;width:239px;text-align:center;">11-459</div>
<div class="t" style="left:301px;top:663.42px;font-size:12.5px;line-height:12.5px;color:#000"><span style="letter-spacing:-0.44px">WALLBOX</span><span style="letter-spacing:0px"> </span><span style="letter-spacing:-0.44px">W</span><span style="letter-spacing:0.8px">ith</span><span style="letter-spacing:0px"> </span><span style="letter-spacing:0.8px">rackstrip</span><span style="letter-spacing:0px"> </span><span style="letter-spacing:0px">8</span><span style="letter-spacing:-0.44px">ZX</span></div>
<div class="t" style="left:802px;top:663.42px;font-size:12.5px;line-height:12.5px;color:#000;width:266px;text-align:center;">78,00</div>
<div class="t" style="left:1068px;top:663.42px;font-size:12.5px;line-height:12.5px;color:#000;width:249px;text-align:center;">68,14</div>
<div class="r" style="left:59px;top:697px;width:1259px;height:1px;background:#4472c4"></div>
<div class="t" style="left:59px;top:683.42px;font-size:12.5px;line-height:12.5px;color:#000;width:239px;text-align:center;">11-462</div>
<div class="t" style="left:301px;top:683.42px;font-size:12.5px;line-height:12.5px;color:#000"><span style="letter-spacing:-0.44px">RACKPOD</span><span style="letter-spacing:0px"> </span><span style="letter-spacing:-0.44px">W</span><span style="letter-spacing:0.8px">all</span><span style="letter-spacing:0px"> </span><span style="letter-spacing:0.8px">rack</span><span style="letter-spacing:0px"> </span><span style="letter-spacing:0px">2</span><span style="letter-spacing:-0.44px">C</span><span style="letter-spacing:0px"> </span><span style="letter-spacing:-0.44px">M</span><span style="letter-spacing:0.8px">ini</span></div>
<div class="t" style="left:802px;top:683.42px;font-size:12.5px;line-height:12.5px;color:#000;width:266px;text-align:center;">121,00</div>
<div class="t" style="left:1068px;top:683.42px;font-size:12.5px;line-height:12.5px;color:#000;width:249px;text-align:center;">109,48</div>
<div class="r" style="left:297px;top:376px;width:506px;height:23px;border:2px solid #217346;box-sizing:border-box"></div>
<div class="r" style="left:534px;top:296px;width:268px;height:399px;background:#fdfdfd;border:1px solid #c6c6c6;box-sizing:border-box;box-shadow:0 1px 3px rgba(0,0,0,0.22)"></div>
<svg class="r" style="left:537px;top:299px" width="20" height="20" viewBox="0 0 20 20"><text x="1.5" y="9" font-size="9" font-family="Liberation Sans" font-weight="700" fill="#1e8bd6">A</text><text x="1.5" y="18" font-size="9" font-family="Liberation Sans" fill="#222">Z</text><path d="M14.5 2 V18 M11 14.5 L14.5 18 L18 14.5" stroke="#222" stroke-width="1.2" fill="none"/></svg>
<svg class="r" style="left:537px;top:323px" width="20" height="20" viewBox="0 0 20 20"><text x="1.5" y="9" font-size="9" font-family="Liberation Sans" fill="#222">Z</text><text x="1.5" y="18" font-size="9" font-family="Liberation Sans" font-weight="700" fill="#1e8bd6">A</text><path d="M14.5 2 V18 M11 14.5 L14.5 18 L18 14.5" stroke="#222" stroke-width="1.2" fill="none"/></svg>
<div class="t" style="left:567px;top:302.84px;font-size:12px;line-height:12px;color:#404040;letter-spacing:0.088px"><u>S</u>ort A to Z</div>
<div class="t" style="left:567px;top:326.84px;font-size:12px;line-height:12px;color:#404040;letter-spacing:0.028px">S<u>o</u>rt Z to A</div>
<div class="t" style="left:567px;top:350.84px;font-size:12px;line-height:12px;color:#404040;letter-spacing:-0.041px">Sor<u>t</u> by Color</div>
<div class="r" style="left:788px;top:352px;width:0;height:0;border-left:4px solid #444;border-top:4px solid transparent;border-bottom:4px solid transparent"></div>
<div class="r" style="left:567px;top:369px;width:234px;height:1px;background:#e1e1e1"></div>
<svg class="r" style="left:538px;top:374px" width="20" height="19" viewBox="0 0 20 19"><path d="M1 1 H16 L10 8 V18 L8 16 V8 Z" fill="#f0f0f0" stroke="#b0b0b0" stroke-width="1"/><path d="M11 12 L17 18 M17 12 L11 18" stroke="#b0b0b0" stroke-width="1.2"/></svg>
<div class="t" style="left:567px;top:376.84px;font-size:12px;line-height:12px;color:#a6a6a6;letter-spacing:-0.040px"><u>C</u>lear Filter From "Product Description"</div>
<div class="t" style="left:567px;top:400.84px;font-size:12px;line-height:12px;color:#a6a6a6;letter-spacing:-0.046px">F<u>i</u>lter by Color</div>
<div class="r" style="left:788px;top:402px;width:0;height:0;border-left:4px solid #a6a6a6;border-top:4px solid transparent;border-bottom:4px solid transparent"></div>
<div class="t" style="left:567px;top:424.84px;font-size:12px;line-height:12px;color:#404040;letter-spacing:-0.126px">Text <u>F</u>ilters</div>
<div class="r" style="left:788px;top:426px;width:0;height:0;border-left:4px solid #444;border-top:4px solid transparent;border-bottom:4px solid transparent"></div>
<div class="r" style="left:567px;top:443px;width:234px;height:1px;background:#e1e1e1"></div>
<div class="r" style="left:565px;top:449px;width:230px;height:21px;background:#fff;border:1px solid #a6a6a6;box-sizing:border-box"></div>
<div class="t" style="left:567px;top:452.84px;font-size:12px;line-height:12px;color:#555;letter-spacing:-0.421px">Search</div>
<svg class="r" style="left:777px;top:450px" width="17" height="18" viewBox="0 0 17 18"><circle cx="10.5" cy="6.5" r="5" fill="none" stroke="#333" stroke-width="1.1"/><path d="M7 10 L1.5 16" stroke="#333" stroke-width="1.3"/></svg>
<div class="r" style="left:565px;top:473px;width:230px;height:169px;background:#fff;border:1px solid #dcdcdc;box-sizing:border-box"></div>
<div class="r" style="left:566px;top:474px;width:211px;height:150px;overflow:hidden">
<div class="r" style="left:12px;top:8px;width:0;height:18px;border-left:1px dotted #777"></div>
<div class="r" style="left:13px;top:8px;width:9px;height:0;border-top:1px dotted #777"></div>
<div class="r" style="left:22px;top:3px;width:11px;height:11px;background:#fff;border:1px solid #333;box-sizing:border-box"></div>
<svg class="r" style="left:23px;top:4px" width="9" height="9" viewBox="0 0 9 9"><path d="M1.5 4.5 L3.5 7 L8 1.5" stroke="#000" stroke-width="1.7" fill="none"/></svg>
<div class="t" style="left:36px;top:1px;font-size:12.5px;line-height:17px;color:#000;transform:scaleX(0.9373);transform-origin:0 0;white-space:nowrap">(Select All)</div>
<div class="r" style="left:12px;top:26px;width:0;height:18px;border-left:1px dotted #777"></div>
<div class="r" style="left:13px;top:26px;width:9px;height:0;border-top:1px dotted #777"></div>
<div class="r" style="left:22px;top:21px;width:11px;height:11px;background:#fff;border:1px solid #333;box-sizing:border-box"></div>
<svg class="r" style="left:23px;top:22px" width="9" height="9" viewBox="0 0 9 9"><path d="M1.5 4.5 L3.5 7 L8 1.5" stroke="#000" stroke-width="1.7" fill="none"/></svg>
<div class="r" style="left:34px;top:18px;width:176px;height:17px;background:#0078d7;border:1px dotted #000;box-sizing:border-box"></div>
<div class="t" style="left:36px;top:19px;font-size:12.5px;line-height:17px;color:#fff;transform:scaleX(0.8658);transform-origin:0 0;white-space:nowrap">ACOUSTIC SCRIPT LECTERN Ash</div>
<div class="r" style="left:12px;top:44px;width:0;height:18px;border-left:1px dotted #777"></div>
<div class="r" style="left:13px;top:44px;width:9px;height:0;border-top:1px dotted #777"></div>
<div class="r" style="left:22px;top:39px;width:11px;height:11px;background:#fff;border:1px solid #333;box-sizing:border-box"></div>
<svg class="r" style="left:23px;top:40px" width="9" height="9" viewBox="0 0 9 9"><path d="M1.5 4.5 L3.5 7 L8 1.5" stroke="#000" stroke-width="1.7" fill="none"/></svg>
<div class="t" style="left:36px;top:37px;font-size:12.5px;line-height:17px;color:#000;transform:scaleX(0.8943);transform-origin:0 0;white-space:nowrap">ACOUSTIC TABLE Ash</div>
<div class="r" style="left:12px;top:62px;width:0;height:18px;border-left:1px dotted #777"></div>
<div class="r" style="left:13px;top:62px;width:9px;height:0;border-top:1px dotted #777"></div>
<div class="r" style="left:22px;top:57px;width:11px;height:11px;background:#fff;border:1px solid #333;box-sizing:border-box"></div>
<svg class="r" style="left:23px;top:58px" width="9" height="9" viewBox="0 0 9 9"><path d="M1.5 4.5 L3.5 7 L8 1.5" stroke="#000" stroke-width="1.7" fill="none"/></svg>
<div class="t" style="left:36px;top:55px;font-size:12.5px;line-height:17px;color:#000;transform:scaleX(0.9159);transform-origin:0 0;white-space:nowrap">ACOUSTIC TABLE Ash Mini</div>
<div class="r" style="left:12px;top:80px;width:0;height:18px;border-left:1px dotted #777"></div>
<div class="r" style="left:13px;top:80px;width:9px;height:0;border-top:1px dotted #777"></div>
<div class="r" style="left:22px;top:75px;width:11px;height:11px;background:#fff;border:1px solid #333;box-sizing:border-box"></div>
<svg class="r" style="left:23px;top:76px" width="9" height="9" viewBox="0 0 9 9"><path d="M1.5 4.5 L3.5 7 L8 1.5" stroke="#000" stroke-width="1.7" fill="none"/></svg>
<div class="t" style="left:36px;top:73px;font-size:12.5px;line-height:17px;color:#000;transform:scaleX(0.9000);transform-origin:0 0;white-space:nowrap">ACOUSTIC TABLE Ash Zero</div>
<div class="r" style="left:12px;top:98px;width:0;height:18px;border-left:1px dotted #777"></div>
<div class="r" style="left:13px;top:98px;width:9px;height:0;border-top:1px dotted #777"></div>
<div class="r" style="left:22px;top:93px;width:11px;height:11px;background:#fff;border:1px solid #333;box-sizing:border-box"></div>
<svg class="r" style="left:23px;top:94px" width="9" height="9" viewBox="0 0 9 9"><path d="M1.5 4.5 L3.5 7 L8 1.5" stroke="#000" stroke-width="1.7" fill="none"/></svg>
<div class="t" style="left:36px;top:91px;font-size:12.5px;line-height:17px;color:#000;transform:scaleX(0.8655);transform-origin:0 0;white-space:nowrap">ADJUSTABLE LECTERN Ash</div>
<div class="r" style="left:12px;top:116px;width:0;height:18px;border-left:1px dotted #777"></div>
<div class="r" style="left:13px;top:116px;width:9px;height:0;border-top:1px dotted #777"></div>
<div class="r" style="left:22px;top:111px;width:11px;height:11px;background:#fff;border:1px solid #333;box-sizing:border-box"></div>
<svg class="r" style="left:23px;top:112px" width="9" height="9" viewBox="0 0 9 9"><path d="M1.5 4.5 L3.5 7 L8 1.5" stroke="#000" stroke-width="1.7" fill="none"/></svg>
<div class="t" style="left:36px;top:109px;font-size:12.5px;line-height:17px;color:#000;transform:scaleX(0.9048);transform-origin:0 0;white-space:nowrap">PATCHCORD HANGER Ash</div>
<div class="r" style="left:12px;top:134px;width:0;height:18px;border-left:1px dotted #777"></div>
<div class="r" style="left:13px;top:134px;width:9px;height:0;border-top:1px dotted #777"></div>
<div class="r" style="left:22px;top:129px;width:11px;height:11px;background:#fff;border:1px solid #333;box-sizing:border-box"></div>
<svg class="r" style="left:23px;top:130px" width="9" height="9" viewBox="0 0 9 9"><path d="M1.5 4.5 L3.5 7 L8 1.5" stroke="#000" stroke-width="1.7" fill="none"/></svg>
<div class="t" style="left:36px;top:127px;font-size:12.5px;line-height:17px;color:#000;transform:scaleX(0.9085);transform-origin:0 0;white-space:nowrap">PATCHCORD HANGER Black Ash</div>
<div class="r" style="left:12px;top:152px;width:0;height:18px;border-left:1px dotted #777"></div>
<div class="r" style="left:13px;top:152px;width:9px;height:0;border-top:1px dotted #777"></div>
<div class="r" style="left:22px;top:147px;width:11px;height:11px;background:#fff;border:1px solid #333;box-sizing:border-box"></div>
<svg class="r" style="left:23px;top:148px" width="9" height="9" viewBox="0 0 9 9"><path d="M1.5 4.5 L3.5 7 L8 1.5" stroke="#000" stroke-width="1.7" fill="none"/></svg>
<div class="t" style="left:36px;top:145px;font-size:12.5px;line-height:17px;color:#000;transform:scaleX(0.8438);transform-origin:0 0;white-space:nowrap">PATCHCORD RACK Ash</div>
</div>
<div class="r" style="left:777px;top:474px;width:17px;height:150px;background:#f0f0f0"></div>
<div class="r" style="left:778px;top:491px;width:14px;height:32px;background:#c6c6c6"></div>
<svg class="r" style="left:780px;top:479px" width="10" height="7" viewBox="0 0 10 7"><path d="M1 6 L5 2 L9 6" stroke="#555" stroke-width="1.3" fill="none"/></svg>
<svg class="r" style="left:780px;top:610px" width="10" height="7" viewBox="0 0 10 7"><path d="M1 1 L5 5 L9 1" stroke="#555" stroke-width="1.3" fill="none"/></svg>
<div class="r" style="left:566px;top:624px;width:228px;height:16px;background:#f0f0f0"></div>
<div class="r" style="left:583px;top:625px;width:155px;height:14px;background:#c6c6c6"></div>
<svg class="r" style="left:569px;top:627px" width="7" height="10" viewBox="0 0 7 10"><path d="M6 1 L2 5 L6 9" stroke="#555" stroke-width="1.3" fill="none"/></svg>
<svg class="r" style="left:765px;top:627px" width="7" height="10" viewBox="0 0 7 10"><path d="M1 1 L5 5 L1 9" stroke="#555" stroke-width="1.3" fill="none"/></svg>
<div class="r" style="left:637px;top:657px;width:73px;height:21px;background:#e1e1e1;border:2px solid #0078d7;box-sizing:border-box"></div>
<div class="t" style="left:637px;top:662.84px;font-size:12px;line-height:12px;color:#000;width:73px;text-align:center;">OK</div>
<div class="r" style="left:721px;top:657px;width:73px;height:21px;background:#e1e1e1;border:1px solid #adadad;box-sizing:border-box"></div>
<div class="t" style="left:721px;top:662.84px;font-size:12px;line-height:12px;color:#000;width:73px;text-align:center;">Cancel</div>
<div class="r" style="left:535px;top:683px;width:266px;height:11px;background:#f0f0f0;border-top:1px solid #e6e6e6;box-sizing:border-box"></div>
<div class="r" style="left:795px;top:686px;width:2px;height:2px;background:#999"></div>
<div class="r" style="left:792px;top:689px;width:2px;height:2px;background:#999"></div>
<div class="r" style="left:795px;top:689px;width:2px;height:2px;background:#999"></div>
<div class="r" style="left:802px;top:376px;width:2px;height:18px;background:#217346"></div>
<div class="r" style="left:802px;top:395px;width:3px;height:5px;background:#217346"></div>
</body></html>
